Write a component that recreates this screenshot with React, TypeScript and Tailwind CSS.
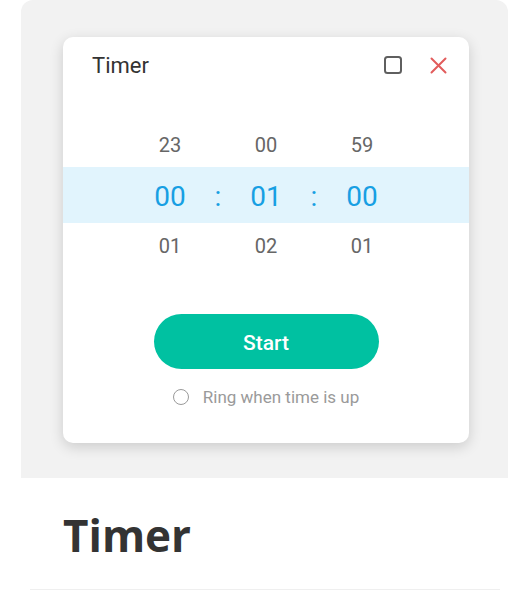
import React from 'react';

const columns = [
  { prev: '23', value: '00', next: '01' },
  { prev: '00', value: '01', next: '02' },
  { prev: '59', value: '00', next: '01' },
];

const Row = ({ cells, active }: { cells: string[]; active?: boolean }) => (
  <div
    className={
      active
        ? 'flex h-[56px] items-center justify-center bg-[#e1f4fd] pt-[3px] text-[28px] text-[#179fe3]'
        : 'flex items-center justify-center text-[20px] text-[#666666]'
    }
  >
    {cells.map((c, i) => (
      <React.Fragment key={i}>
        {i > 0 && <span className="w-[36px] text-center">{active ? ':' : ''}</span>}
        <span className="w-[60px] text-center">{c}</span>
      </React.Fragment>
    ))}
  </div>
);

const App = () => {
  return (
    <div className="min-h-[590px] w-[510px] bg-white">
      {/* Preview panel */}
      <div className="ml-[21px] w-[487px] rounded-t-[12px] bg-[#f2f2f2] pt-[37px] pb-[35px]">
        <div
          className="ml-[42px] h-[406px] w-[406px] rounded-[10px] bg-white shadow-[0_4px_14px_rgba(0,0,0,0.16)]"
          style={{ fontFamily: 'Roboto, "Noto Sans", sans-serif' }}
        >
          <div className="flex h-[56px] items-center pl-[29px] pr-[22px]">
            <span className="flex-1 text-[22px] text-[#333333]">Timer</span>
            <svg width="18" height="18" viewBox="0 0 18 18" className="mr-[28px]">
              <rect x="1" y="1" width="16" height="16" rx="2.5" fill="none" stroke="#5f5f5f" strokeWidth="2" />
            </svg>
            <svg width="17" height="17" viewBox="0 0 17 17">
              <path d="M1.5 1.5 L15.5 15.5 M15.5 1.5 L1.5 15.5" stroke="#e25c5c" strokeWidth="2" strokeLinecap="round" />
            </svg>
          </div>

          <div className="mt-[26px]">
            <div className="flex h-[48px] items-center justify-center pt-[3px]">
              <Row cells={columns.map((c) => c.prev)} />
            </div>
            <Row cells={columns.map((c) => c.value)} active />
            <div className="flex h-[46px] items-center justify-center">
              <Row cells={columns.map((c) => c.next)} />
            </div>
          </div>

          <div className="mt-[45px] flex justify-center">
            <button className="h-[55px] w-[225px] rounded-full bg-[#00c1a1] pt-[4px] text-[21px] font-medium text-white">
              Start
            </button>
          </div>

          <div className="mt-[20px] flex items-center justify-center gap-[14px]">
            <span className="h-[16px] w-[16px] rounded-full border border-[#9a9a9a]" />
            <span className="text-[17px] leading-[16px] text-[#9a9a9a]">Ring when time is up</span>
          </div>
        </div>
      </div>

      <div className="pl-[30px] pr-[10px]">
        <h1
          className="flex h-[111px] items-center pl-[33px] pt-[3px] text-[44px] font-bold text-[#333333]"
          style={{ fontFamily: '"Open Sans", "Noto Sans", sans-serif' }}
        >
          Timer
        </h1>
        <div className="h-px bg-[#efefef]" />
      </div>
    </div>
  );
};

export default App;
